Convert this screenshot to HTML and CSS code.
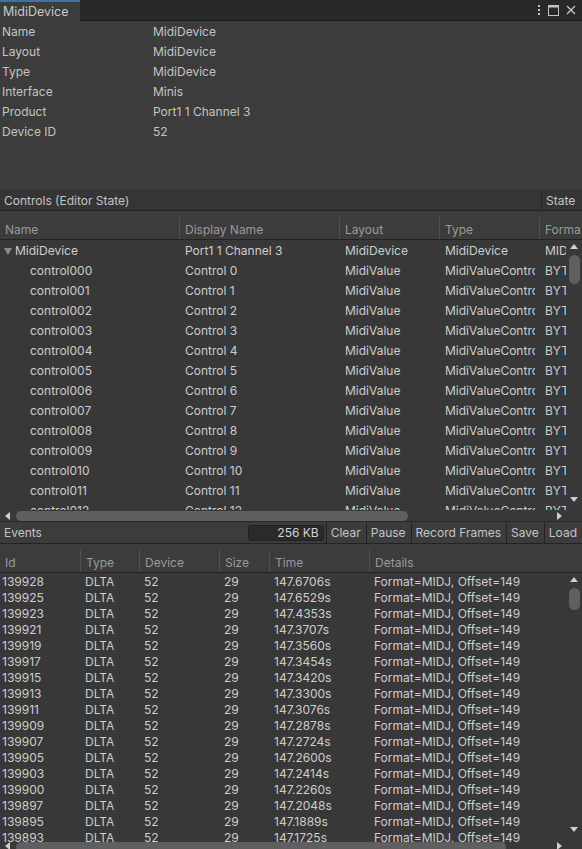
FILE: index.html
```html
<!DOCTYPE html>
<html lang="en">
<head>
    <meta charset="UTF-8">
    <title>Input Debug - MidiDevice</title>
    <link rel="stylesheet" href="styles.css">
</head>
<body>
    <div class="tabbar">
        <div class="tab">MidiDevice</div>
        <div class="win-icons">
            <svg width="4" height="12" viewBox="0 0 4 12"><rect x="1" y="1" width="2" height="2" fill="#c4c4c4"/><rect x="1" y="5" width="2" height="2" fill="#c4c4c4"/><rect x="1" y="9" width="2" height="2" fill="#c4c4c4"/></svg>
            <svg width="11" height="11" viewBox="0 0 11 11"><rect x="0.5" y="0.5" width="10" height="10" fill="none" stroke="#c4c4c4"/><rect x="0" y="0" width="11" height="2.5" fill="#c4c4c4"/></svg>
            <svg width="10" height="10" viewBox="0 0 10 10"><path d="M1 1 L9 9 M9 1 L1 9" stroke="#c4c4c4" stroke-width="1.4"/></svg>
        </div>
    </div>

    <div class="info">
        <div class="info-row"><span class="info-label">Name</span><span>MidiDevice</span></div>
        <div class="info-row"><span class="info-label">Layout</span><span>MidiDevice</span></div>
        <div class="info-row"><span class="info-label">Type</span><span>MidiDevice</span></div>
        <div class="info-row"><span class="info-label">Interface</span><span>Minis</span></div>
        <div class="info-row"><span class="info-label">Product</span><span>Port1 1 Channel 3</span></div>
        <div class="info-row"><span class="info-label">Device ID</span><span>52</span></div>
    </div>

    <div class="section-head">
        <div class="section-title">Controls (Editor State)</div>
        <div class="tool-btn state-btn">State</div>
    </div>

    <div class="controls">
        <div class="col-head ctl-cols">
            <div class="hc">Name</div>
            <div class="hc sep">Display Name</div>
            <div class="hc sep">Layout</div>
            <div class="hc sep">Type</div>
            <div class="hc sep">Format</div>
        </div>
        <div class="pane">
            <div class="pane-main ctl-body" id="ctlBody">
                <div class="trow ctl-cols">
                    <div class="cell root"><span class="tri"></span>MidiDevice</div>
                    <div class="cell c2">Port1 1 Channel 3</div>
                    <div class="cell c3">MidiDevice</div>
                    <div class="cell c3">MidiDevice</div>
                    <div class="cell c3">MIDI</div>
                </div>
            </div>
            <div class="vscroll ctl-vscroll">
                <div class="arrow-up"></div>
                <div class="vthumb ctl-thumb"></div>
                <div class="spacer"></div>
                <div class="arrow-down"></div>
            </div>
        </div>
        <div class="hscroll">
            <div class="arrow-left"></div>
            <div class="hthumb ctl-hthumb"></div>
            <div class="spacer"></div>
            <div class="arrow-right"></div>
        </div>
    </div>

    <div class="events-bar">
        <div class="section-title">Events</div>
        <div class="spacer"></div>
        <div class="size-field">256 KB</div>
        <div class="tool-btn">Clear</div>
        <div class="tool-btn">Pause</div>
        <div class="tool-btn">Record Frames</div>
        <div class="tool-btn">Save</div>
        <div class="tool-btn">Load</div>
    </div>

    <div class="events">
        <div class="col-head ev-cols">
            <div class="hc">Id</div>
            <div class="hc sep">Type</div>
            <div class="hc sep">Device</div>
            <div class="hc sep">Size</div>
            <div class="hc sep">Time</div>
            <div class="hc sep">Details</div>
        </div>
        <div class="pane">
            <div class="pane-main ev-body" id="evBody"></div>
            <div class="vscroll ev-vscroll">
                <div class="arrow-up"></div>
                <div class="vthumb ev-thumb"></div>
                <div class="spacer"></div>
                <div class="arrow-down"></div>
            </div>
        </div>
        <div class="hscroll ev-hscroll">
            <div class="arrow-left"></div>
            <div class="hthumb ev-hthumb"></div>
            <div class="spacer"></div>
            <div class="arrow-right"></div>
        </div>
    </div>

    <script>
        const ctlBody = document.getElementById('ctlBody');
        for (let i = 0; i <= 12; i++) {
            const id = String(i).padStart(3, '0');
            const row = document.createElement('div');
            row.className = 'trow ctl-cols';
            row.innerHTML = `
                <div class="cell child">control${id}</div>
                <div class="cell c2">Control ${i}</div>
                <div class="cell c3">MidiValue</div>
                <div class="cell c3">MidiValueControl</div>
                <div class="cell c3">BYTE</div>`;
            ctlBody.appendChild(row);
        }

        const events = [
            ['139928', '147.6706s'], ['139925', '147.6529s'], ['139923', '147.4353s'],
            ['139921', '147.3707s'], ['139919', '147.3560s'], ['139917', '147.3454s'],
            ['139915', '147.3420s'], ['139913', '147.3300s'], ['139911', '147.3076s'],
            ['139909', '147.2878s'], ['139907', '147.2724s'], ['139905', '147.2600s'],
            ['139903', '147.2414s'], ['139900', '147.2260s'], ['139897', '147.2048s'],
            ['139895', '147.1889s'], ['139893', '147.1725s']
        ];
        const evBody = document.getElementById('evBody');
        events.forEach(([id, time]) => {
            const row = document.createElement('div');
            row.className = 'erow ev-cols';
            row.innerHTML = `
                <div class="cell e1">${id}</div>
                <div class="cell e2">DLTA</div>
                <div class="cell e2">52</div>
                <div class="cell e2">29</div>
                <div class="cell e2">${time}</div>
                <div class="cell e2">Format=MIDJ, Offset=149</div>`;
            evBody.appendChild(row);
        });
    </script>
</body>
</html>
```

FILE: styles.css
```css
body {
    margin: 0;
    width: 582px;
    height: 849px;
    overflow: hidden;
    background-color: #383838;
    color: #c4c4c4;
    font-family: Inter, "Noto Sans", sans-serif;
    font-size: 12px;
    display: flex;
    flex-direction: column;
}
.spacer {
    flex: 1;
}
.tabbar {
    height: 21px;
    flex: none;
    display: flex;
    justify-content: space-between;
    background-color: #282828;
    border-bottom: 1px solid #1e1e1e;
    box-sizing: border-box;
}
.tab {
    width: 80px;
    height: 21px;
    box-sizing: border-box;
    padding: 2px 0 0 3px;
    background-color: #3c3c3c;
    border-top: 2px solid #3a72b0;
    font-size: 12.5px;
    line-height: 16px;
    color: #c8c8c8;
}
.win-icons {
    display: flex;
    align-items: center;
    gap: 7px;
    padding-right: 6px;
}
.info {
    height: 169px;
    flex: none;
    background-color: #3c3c3c;
}
.info-row {
    height: 20px;
    display: flex;
    align-items: center;
    padding-left: 2px;
}
.info-label {
    width: 151px;
}
.section-head {
    height: 21px;
    flex: none;
    display: flex;
    align-items: center;
    background-color: #353535;
    border-top: 1px solid #2f2f2f;
    border-bottom: 1px solid #232323;
    box-sizing: border-box;
}
.section-title {
    padding-left: 4px;
    flex: 1;
}
.tool-btn {
    height: 100%;
    display: flex;
    align-items: center;
    padding: 0 5px 0 4px;
    border-left: 1px solid #232323;
    color: #c4c4c4;
}
.state-btn {
    width: 41px;
    box-sizing: border-box;
}
.controls {
    height: 310px;
    flex: none;
    display: flex;
    flex-direction: column;
    background-color: #383838;
}
.pane {
    flex: 1;
    display: flex;
    min-height: 0;
}
.pane-main {
    flex: 1;
    overflow: hidden;
}
.col-head {
    height: 29px;
    flex: none;
    box-sizing: border-box;
    display: flex;
    align-items: flex-end;
    overflow: hidden;
    background-color: #3c3c3c;
    border-bottom: 1px solid #232323;
    color: #9a9a9a;
}
.hc {
    height: 22px;
    box-sizing: border-box;
    padding: 5px 0 0 5px;
    white-space: nowrap;
    overflow: hidden;
    flex: none;
}
.hc.sep {
    border-left: 1px solid #515151;
}
.ctl-cols > :nth-child(1) { width: 179px; }
.ctl-cols > :nth-child(2) { width: 160px; }
.ctl-cols > :nth-child(3) { width: 100px; }
.ctl-cols > :nth-child(4) { width: 100px; }
.ctl-cols > :nth-child(5) { width: 42px; }
.ev-cols > :nth-child(1) { width: 80px; }
.ev-cols > :nth-child(2) { width: 59px; }
.ev-cols > :nth-child(3) { width: 80px; }
.ev-cols > :nth-child(4) { width: 50px; }
.ev-cols > :nth-child(5) { width: 100px; }
.ev-cols > :nth-child(6) { width: 200px; }
.trow {
    height: 20px;
    display: flex;
    align-items: center;
    color: #cdcdcd;
}
.cell {
    flex: none;
    white-space: nowrap;
    overflow: hidden;
    box-sizing: border-box;
    clip-path: inset(0 4px 0 0);
}
.cell.root {
    padding-left: 4px;
    display: flex;
    align-items: center;
}
.cell.child {
    padding-left: 30px;
}
.cell.c2 {
    padding-left: 6px;
}
.cell.c3 {
    padding-left: 6px;
}
.tri {
    width: 0;
    height: 0;
    border-left: 4.5px solid transparent;
    border-right: 4.5px solid transparent;
    border-top: 7px solid #8c8c8c;
    margin-right: 3px;
    margin-top: 2px;
}
.vscroll {
    width: 16px;
    flex: none;
    display: flex;
    flex-direction: column;
    align-items: center;
    box-sizing: border-box;
    background-color: #383838;
}
.ctl-vscroll {
    padding: 4px 0 8px;
}
.arrow-up {
    width: 0;
    height: 0;
    border-left: 4px solid transparent;
    border-right: 4px solid transparent;
    border-bottom: 5px solid #d0d0d0;
    margin-bottom: 6px;
}
.arrow-down {
    width: 0;
    height: 0;
    border-left: 4px solid transparent;
    border-right: 4px solid transparent;
    border-top: 5px solid #d0d0d0;
}
.vthumb {
    width: 11px;
    border-radius: 6px;
    background-color: #5f5f5f;
}
.ctl-thumb {
    height: 29px;
}
.ev-thumb {
    height: 22px;
}
.ev-vscroll {
    padding: 4px 0 10px;
}
.hscroll {
    height: 11px;
    flex: none;
    display: flex;
    align-items: center;
    padding: 0 20px 0 5px;
    background-color: #383838;
}
.arrow-left {
    width: 0;
    height: 0;
    border-top: 4px solid transparent;
    border-bottom: 4px solid transparent;
    border-right: 5px solid #d0d0d0;
    margin-right: 6px;
}
.arrow-right {
    width: 0;
    height: 0;
    border-top: 4px solid transparent;
    border-bottom: 4px solid transparent;
    border-left: 5px solid #d0d0d0;
}
.hthumb {
    height: 10px;
    border-radius: 5px;
    background-color: #5f5f5f;
}
.ctl-hthumb {
    width: 392px;
}
.ev-hthumb {
    width: 490px;
}
.events-bar {
    height: 23px;
    flex: none;
    display: flex;
    align-items: center;
    background-color: #3c3c3c;
    border-top: 1px solid #2a2a2a;
    border-bottom: 1px solid #232323;
    box-sizing: border-box;
}
.size-field {
    width: 76px;
    height: 16px;
    box-sizing: border-box;
    margin-right: 2px;
    padding-right: 4px;
    text-align: right;
    line-height: 14px;
    background-color: #2a2a2a;
    border: 1px solid #212121;
    border-radius: 3px;
    color: #d2d2d2;
}
.events {
    flex: 1;
    display: flex;
    flex-direction: column;
    min-height: 0;
}
.erow {
    height: 16px;
    display: flex;
    align-items: center;
    color: #cdcdcd;
}
.cell.e1 {
    padding-left: 2px;
}
.cell.e2 {
    padding-left: 5px;
}
.ev-hscroll {
    height: 7px;
    align-items: flex-start;
}
```
